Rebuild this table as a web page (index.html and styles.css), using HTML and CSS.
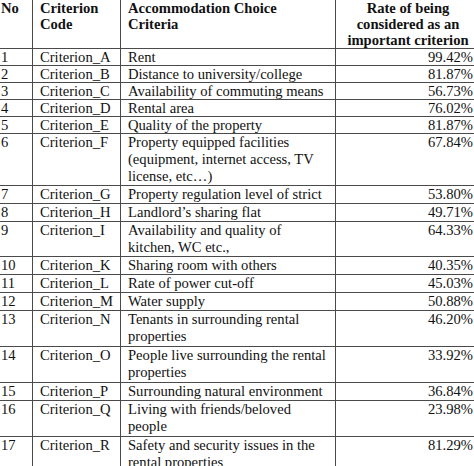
FILE: index.html
```html
<!DOCTYPE html>
<html>
<head>
<meta charset="utf-8">
<link rel="stylesheet" href="styles.css">
</head>
<body>
<table class="crit">
<colgroup>
<col class="c-no"><col class="c-code"><col class="c-crit"><col class="c-rate">
</colgroup>
<thead>
<tr class="head">
<th class="left">No</th>
<th class="left">Criterion<br>Code</th>
<th class="left">Accommodation Choice<br>Criteria</th>
<th class="center">Rate of being<br>considered as an<br>important criterion</th>
</tr>
</thead>
<tbody>
<tr class="tight"><td>1</td><td>Criterion_A</td><td>Rent</td><td class="num">99.42%</td></tr>
<tr class="tight"><td>2</td><td>Criterion_B</td><td>Distance to university/college</td><td class="num">81.87%</td></tr>
<tr class="tight"><td>3</td><td>Criterion_C</td><td>Availability of commuting means</td><td class="num">56.73%</td></tr>
<tr class="tight"><td>4</td><td>Criterion_D</td><td>Rental area</td><td class="num">76.02%</td></tr>
<tr class="tight"><td>5</td><td>Criterion_E</td><td>Quality of the property</td><td class="num">81.87%</td></tr>
<tr><td>6</td><td>Criterion_F</td><td>Property equipped facilities<br>(equipment, internet access, TV<br>license, etc…)</td><td class="num">67.84%</td></tr>
<tr><td>7</td><td>Criterion_G</td><td>Property regulation level of strict</td><td class="num">53.80%</td></tr>
<tr><td>8</td><td>Criterion_H</td><td>Landlord’s sharing flat</td><td class="num">49.71%</td></tr>
<tr><td>9</td><td>Criterion_I</td><td>Availability and quality of<br>kitchen, WC etc.,</td><td class="num">64.33%</td></tr>
<tr><td>10</td><td>Criterion_K</td><td>Sharing room with others</td><td class="num">40.35%</td></tr>
<tr><td>11</td><td>Criterion_L</td><td>Rate of power cut-off</td><td class="num">45.03%</td></tr>
<tr><td>12</td><td>Criterion_M</td><td>Water supply</td><td class="num">50.88%</td></tr>
<tr class="tall"><td>13</td><td>Criterion_N</td><td>Tenants in surrounding rental<br>properties</td><td class="num">46.20%</td></tr>
<tr class="tall"><td>14</td><td>Criterion_O</td><td>People live surrounding the rental<br>properties</td><td class="num">33.92%</td></tr>
<tr><td>15</td><td>Criterion_P</td><td>Surrounding natural environment</td><td class="num">36.84%</td></tr>
<tr class="tall"><td>16</td><td>Criterion_Q</td><td>Living with friends/beloved<br>people</td><td class="num">23.98%</td></tr>
<tr class="last"><td>17</td><td>Criterion_R</td><td>Safety and security issues in the<br>rental properties</td><td class="num">81.29%</td></tr>
</tbody>
</table>
</body>
</html>
```
FILE: styles.css
```css
html, body {
  margin: 0;
  padding: 0;
  background: #ffffff;
  overflow: hidden;
}
body {
  width: 474px;
  height: 466px;
}
.crit {
  border-collapse: collapse;
  table-layout: fixed;
  width: 487px;
  margin-left: -7px;
  margin-top: -1px;
  font-family: "Liberation Serif", "Times New Roman", serif;
  font-size: 14.6px;
  color: #111111;
}
.c-no { width: 39px; }
.c-code { width: 88px; }
.c-crit { width: 215px; }
.c-rate { width: 145px; }
.crit th, .crit td {
  border: 1px solid #4a4a4a;
  padding: 0 7px;
  vertical-align: top;
  white-space: nowrap;
  line-height: 17px;
}
.crit th {
  font-weight: bold;
  line-height: 16px;
}
.crit th.left { text-align: left; }
.crit th.center { text-align: center; }
.crit tr.tight td { line-height: 16px; }
.crit tr.tall td { padding-bottom: 1px; }
.crit tr.last td { line-height: 16.5px; }
.crit td.num { text-align: right; }
```
